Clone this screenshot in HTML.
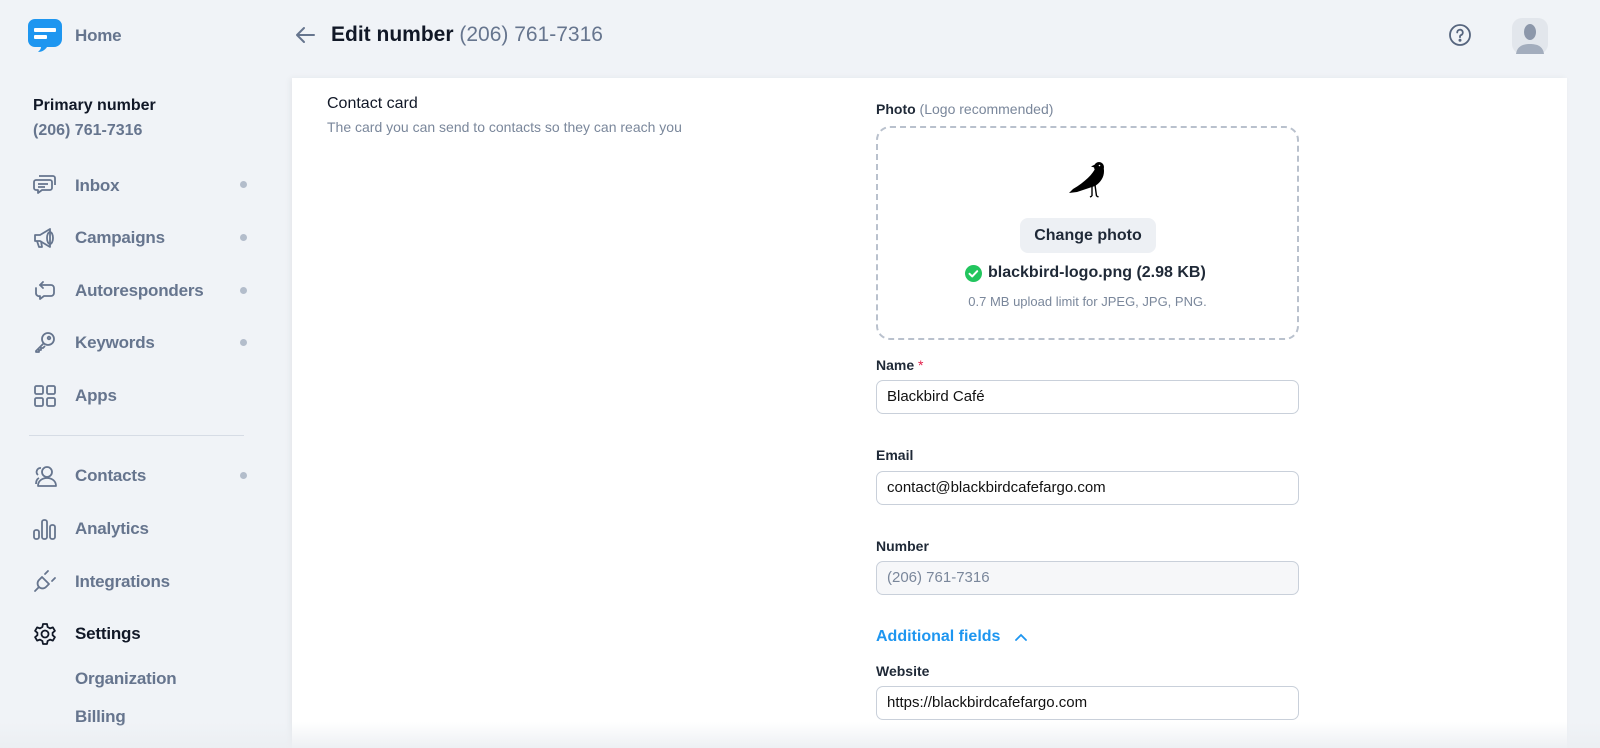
<!DOCTYPE html>
<html><head><meta charset="utf-8"><style>
*{margin:0;padding:0;box-sizing:border-box}
body{width:1600px;height:748px;overflow:hidden;background:#f0f3f7;font-family:"Liberation Sans",Arial,sans-serif;position:relative;color:#111827}
.a{position:absolute;white-space:nowrap}
.nav{position:absolute;left:75px;font-size:17px;color:#66758e;font-weight:bold;letter-spacing:-0.2px}
.ic{position:absolute;left:33px;width:24px;height:24px}
.dot{position:absolute;left:240px;width:7px;height:7px;border-radius:50%;background:#b3bdcb}
.card{position:absolute;left:292px;top:78px;width:1275px;height:670px;background:#fff;box-shadow:-2px 0 6px rgba(0,0,0,.05)}
.lbl{position:absolute;left:876px;font-size:14px;font-weight:bold;color:#1f2937}
.inp{position:absolute;left:876px;width:423px;height:34px;border:1.5px solid #c9d0da;border-radius:7px;font-size:15px;padding:0 10px;line-height:31px;color:#111}
</style></head><body>
<svg class="a" style="left:27px;top:18px" width="36" height="36" viewBox="0 0 36 36"><path d="M8 1h20a7 7 0 0 1 7 7v13a8 8 0 0 1-8 8h-7c-2 3-5 5-9 5 2-2 3-3 3-5H8a7 7 0 0 1-7-7V8a7 7 0 0 1 7-7z" fill="#1e96f0"/><rect x="7" y="10" width="22" height="4" rx="1" fill="#fff"/><rect x="7" y="17" width="13" height="4" rx="1" fill="#fff"/></svg>
<div class="nav" style="top:26px">Home</div>
<div class="a" style="left:33px;top:97px;font-size:16px;font-weight:bold;color:#111827">Primary number</div>
<div class="a" style="left:33px;top:122px;font-size:16px;font-weight:bold;color:#66758e">(206) 761-7316</div>

<svg class="ic" style="top:173px" viewBox="0 0 24 24" fill="none" stroke="#66758e" stroke-width="1.8" stroke-linejoin="round"><path d="M3 7h14a2 2 0 0 1 2 2v6a2 2 0 0 1-2 2H9l-4 3v-3H3a2 2 0 0 1-2-2V9a2 2 0 0 1 2-2z"/><path d="M6 3h14a2 2 0 0 1 2 2v7"/><path d="M5 11h10M5 14h7"/></svg>
<div class="nav" style="top:176px">Inbox</div><div class="dot" style="top:181px"></div>
<svg class="ic" style="top:226px" viewBox="0 0 24 24" fill="none" stroke="#66758e" stroke-width="1.8" stroke-linejoin="round"><path d="M2 9h5l10-6v18L7 15H2z"/><path d="M4 15l2 6h3l-1-6"/><ellipse cx="17" cy="12" rx="3" ry="6"/></svg>
<div class="nav" style="top:228px">Campaigns</div><div class="dot" style="top:234px"></div>
<svg class="ic" style="top:278px" viewBox="0 0 24 24" fill="none" stroke="#66758e" stroke-width="1.8" stroke-linejoin="round" stroke-linecap="round"><path d="M10 4L7 7l3 3"/><path d="M7 7h11a3 3 0 0 1 3 3v5a3 3 0 0 1-3 3h-7l-4 3v-3a3 3 0 0 1-4-3v-5"/></svg>
<div class="nav" style="top:281px">Autoresponders</div><div class="dot" style="top:287px"></div>
<svg class="ic" style="top:330px" viewBox="0 0 24 24" fill="none" stroke="#66758e" stroke-width="1.8" stroke-linejoin="round"><circle cx="15" cy="9" r="6"/><path d="M11 13L3 21v1h3v-2h2v-2h2l2-2"/><circle cx="16" cy="8" r="1.3"/></svg>
<div class="nav" style="top:333px">Keywords</div><div class="dot" style="top:339px"></div>
<svg class="ic" style="top:384px" viewBox="0 0 24 24" fill="none" stroke="#66758e" stroke-width="1.8"><rect x="2" y="2" width="8" height="8" rx="1.5"/><rect x="14" y="2" width="8" height="8" rx="1.5"/><rect x="2" y="14" width="8" height="8" rx="1.5"/><rect x="14" y="14" width="8" height="8" rx="1.5"/></svg>
<div class="nav" style="top:386px">Apps</div>
<div class="a" style="left:29px;top:435px;width:215px;height:1px;background:#d6dce5"></div>
<svg class="ic" style="top:464px" viewBox="0 0 24 24" fill="none" stroke="#66758e" stroke-width="1.8" stroke-linejoin="round"><circle cx="14" cy="8" r="5"/><path d="M5 22c0-5 4-8 9-8s9 3 9 8z"/><path d="M8 4a4 4 0 0 0-3 7M3 20c0-3 1-5 3-6"/></svg>
<div class="nav" style="top:466px">Contacts</div><div class="dot" style="top:472px"></div>
<svg class="ic" style="top:517px" viewBox="0 0 24 24" fill="none" stroke="#66758e" stroke-width="1.8"><rect x="1" y="13" width="5" height="9" rx="2"/><rect x="9" y="3" width="5" height="19" rx="2"/><rect x="17" y="8" width="5" height="14" rx="2"/></svg>
<div class="nav" style="top:519px">Analytics</div>
<svg class="ic" style="top:569px" viewBox="0 0 24 24" fill="none" stroke="#66758e" stroke-width="1.8" stroke-linecap="round" stroke-linejoin="round"><path d="M2 22l4-4"/><path d="M6 18a5 5 0 0 0 7 0l3-3-7-7-3 3a5 5 0 0 0 0 7z"/><path d="M12 5l3-3M19 12l3-3"/></svg>
<div class="nav" style="top:572px">Integrations</div>
<svg class="ic" style="top:622px" viewBox="0 0 24 24" fill="none" stroke="#111827" stroke-width="1.8" stroke-linejoin="round"><circle cx="12" cy="12" r="3.5"/><path d="M10 2h4l.6 3 2.4 1.4 2.9-1 2 3.4-2.3 2v2.4l2.3 2-2 3.4-2.9-1L14.6 19 14 22h-4l-.6-3L7 17.6l-2.9 1-2-3.4 2.3-2v-2.4l-2.3-2 2-3.4 2.9 1L9.4 5z"/></svg>
<div class="nav" style="top:624px;color:#111827">Settings</div>
<div class="nav" style="top:669px">Organization</div>
<div class="nav" style="top:707px">Billing</div>

<svg class="a" style="left:294px;top:25px" width="22" height="20" viewBox="0 0 22 20" fill="none" stroke="#66758e" stroke-width="2" stroke-linecap="round" stroke-linejoin="round"><path d="M20 10H3M10 3L3 10l7 7"/></svg>
<div class="a" style="left:331px;top:23px;font-size:21px;font-weight:bold;color:#111827">Edit number <span style="font-weight:normal;color:#66758e">(206) 761-7316</span></div>
<svg class="a" style="left:1448px;top:23px" width="24" height="24" viewBox="0 0 24 24" fill="none" stroke="#56657e" stroke-width="1.8" stroke-linecap="round"><circle cx="12" cy="12" r="10"/><path d="M9.2 9.5a2.8 2.8 0 1 1 3.8 2.6c-.7.3-1 .9-1 1.6v.6"/><circle cx="12" cy="17.3" r=".6" fill="#56657e"/></svg>
<svg class="a" style="left:1512px;top:18px" width="36" height="36" viewBox="0 0 36 36"><rect width="36" height="36" rx="10" fill="#e2e6ec"/><ellipse cx="18" cy="14" rx="6" ry="8" fill="#8c97aa"/><path d="M4 36c1-8 7-10 14-10s13 2 14 10z" fill="#a3adbd"/></svg>

<div class="card"></div>
<div class="a" style="left:327px;top:95px;font-size:16px;color:#111827">Contact card</div>
<div class="a" style="left:327px;top:119px;font-size:14px;color:#7a879b">The card you can send to contacts so they can reach you</div>

<div class="lbl" style="top:101px">Photo <span style="font-weight:normal;color:#7a879b">(Logo recommended)</span></div>
<div class="a" style="left:876px;top:126px;width:423px;height:214px;border:2px dashed #b9c1cd;border-radius:14px"></div>
<svg class="a" style="left:1068px;top:160px" width="40" height="38" viewBox="0 0 40 38"><path d="M28 7C25 14 17 22 5 29L1 33l8-1c6-2 12-4 18-6 6-4 9-9 9-15 0-3-1-5-3-6z" fill="#000"/><circle cx="31" cy="7" r="5" fill="#000"/><path d="M28 4l-5 2.5 5 1.5z" fill="#000"/><circle cx="31.5" cy="5.5" r=".8" fill="#fff"/><path d="M24 26v10M27 25l1.5 11M24 36l-2 1M28.5 36l2 1" stroke="#000" stroke-width="1.4" fill="none"/></svg>
<div class="a" style="left:1020px;top:218px;width:136px;height:35px;background:#edf0f4;border-radius:8px;font-size:16px;font-weight:bold;color:#1f2937;text-align:center;line-height:35px">Change photo</div>
<svg class="a" style="left:965px;top:265px" width="17" height="17" viewBox="0 0 17 17"><circle cx="8.5" cy="8.5" r="8.5" fill="#22c55e"/><path d="M4.5 8.8l2.7 2.6 5-5.2" stroke="#fff" stroke-width="2" fill="none" stroke-linecap="round" stroke-linejoin="round"/></svg>
<div class="a" style="left:988px;top:264px;font-size:16px;font-weight:bold;color:#1f2937">blackbird-logo.png (2.98 KB)</div>
<div class="a" style="left:876px;top:294px;width:423px;text-align:center;font-size:13px;color:#7a879b">0.7 MB upload limit for JPEG, JPG, PNG.</div>

<div class="lbl" style="top:357px">Name <span style="color:#e11d48;font-weight:normal">*</span></div>
<div class="inp" style="top:380px">Blackbird Café</div>
<div class="lbl" style="top:447px">Email</div>
<div class="inp" style="top:471px">contact@blackbirdcafefargo.com</div>
<div class="lbl" style="top:538px">Number</div>
<div class="inp" style="top:561px;background:#f6f7f9;color:#7a879b">(206) 761-7316</div>
<div class="a" style="left:876px;top:628px;font-size:16px;font-weight:bold;color:#1e96f0">Additional fields</div>
<svg class="a" style="left:1015px;top:633px" width="12" height="8" viewBox="0 0 12 8" fill="none" stroke="#1e96f0" stroke-width="1.8" stroke-linecap="round"><path d="M1 7l5-5 5 5"/></svg>
<div class="lbl" style="top:663px">Website</div>
<div class="inp" style="top:686px">https://blackbirdcafefargo.com</div>
<div class="a" style="left:0;top:722px;width:1600px;height:26px;background:linear-gradient(rgba(240,243,247,0),rgba(235,238,242,.9))"></div>
</body></html>
